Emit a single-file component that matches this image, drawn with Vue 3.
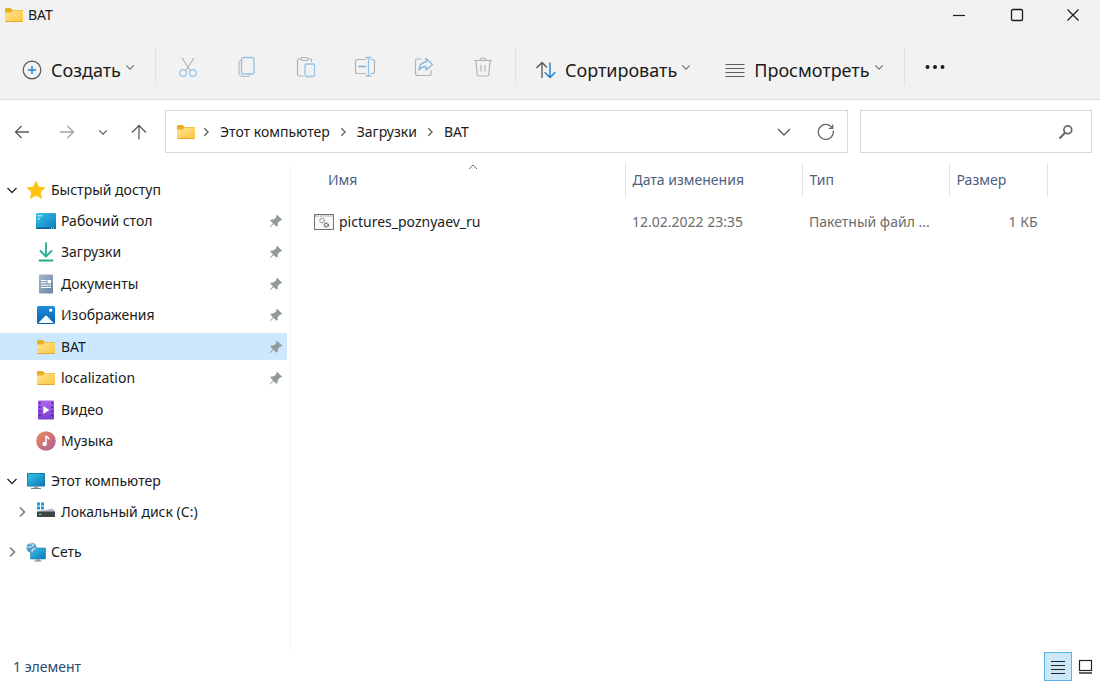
<script setup>
import { ref } from 'vue'

const search = ref('')
const view = ref('details')

const tools = [
  { id: 'cut', label: 'Вырезать' },
  { id: 'copy', label: 'Копировать' },
  { id: 'paste', label: 'Вставить' },
  { id: 'rename', label: 'Переименовать' },
  { id: 'share', label: 'Поделиться' },
  { id: 'delete', label: 'Удалить' },
]

const quick = [
  { icon: 'desktop', name: 'Рабочий стол', pinned: true },
  { icon: 'downloads', name: 'Загрузки', pinned: true },
  { icon: 'documents', name: 'Документы', pinned: true },
  { icon: 'pictures', name: 'Изображения', pinned: true },
  { icon: 'folder', name: 'BAT', pinned: true, current: true },
  { icon: 'folder', name: 'localization', pinned: true },
  { icon: 'video', name: 'Видео' },
  { icon: 'music', name: 'Музыка' },
]

const crumbs = ['Этот компьютер', 'Загрузки', 'BAT']

const files = [
  { name: 'pictures_poznyaev_ru', date: '12.02.2022 23:35', type: 'Пакетный файл ...', size: '1 КБ' },
]
</script>

<template>
  <div class="window">
    <svg class="defs" width="0" height="0" aria-hidden="true">
      <defs>
        <linearGradient id="gFolder" x1="0" y1="0" x2="1" y2="1">
          <stop offset="0" stop-color="#ffe394" /><stop offset="1" stop-color="#fbc73f" />
        </linearGradient>
        <linearGradient id="gBlue" x1="0" y1="0" x2="1" y2="1">
          <stop offset="0" stop-color="#34c6e6" /><stop offset="1" stop-color="#0f78bd" />
        </linearGradient>
        <linearGradient id="gDoc" x1="0" y1="0" x2="1" y2="1">
          <stop offset="0" stop-color="#a3b5ca" /><stop offset="1" stop-color="#6d86a5" />
        </linearGradient>
        <linearGradient id="gPic" x1="0" y1="0" x2="0" y2="1">
          <stop offset="0" stop-color="#1d8fdc" /><stop offset="1" stop-color="#0b5fae" />
        </linearGradient>
        <linearGradient id="gVideo" x1="0" y1="0" x2="0" y2="1">
          <stop offset="0" stop-color="#a866ea" /><stop offset="1" stop-color="#7b3fd0" />
        </linearGradient>
        <linearGradient id="gMusic" x1="0" y1="0" x2="1" y2="1">
          <stop offset="0" stop-color="#ee8a55" /><stop offset="1" stop-color="#b05a9c" />
        </linearGradient>
        <symbol id="folder" viewBox="0 0 20 20">
          <path d="M1 4.2Q1 3 2.200 3H6.500L8.600 5H18Q19 5 19 6V8H1Z" fill="#e9ae22" />
          <path d="M1 7.500H6.800L8.600 5.500H18Q19 5.500 19 6.500V15.800Q19 17 17.800 17H2.200Q1 17 1 15.800Z" fill="url(#gFolder)" />
          <path d="M1 15.600Q1 17 2.200 17H17.800Q19 17 19 15.600V16H1Z" fill="#e3a32c" />
        </symbol>
        <symbol id="desktop" viewBox="0 0 20 20">
          <rect y="2" width="20" height="16" rx="1.300" fill="url(#gBlue)" />
          <path d="M0 16.500H20V17Q20 18 19 18H1Q0 18 0 17Z" fill="#0b5f96" />
          <path d="M2 4h1.500v1.500H2zM2 7h1.500v1.500H2zM4.500 4H6v1.500H4.500zM15 16.600h1v1h-1zM17 16.600h1v1h-1z" fill="#d9f7ff" />
        </symbol>
        <symbol id="downloads" viewBox="0 0 20 20">
          <path d="M10 1V14M4.500 9L10 14.500L15.500 9M3.500 18.500H16.500" fill="none" stroke="#1fb08d" stroke-width="1.800" stroke-linecap="round" stroke-linejoin="round" />
        </symbol>
        <symbol id="documents" viewBox="0 0 20 20">
          <rect x="3" y="0.500" width="14" height="19" rx="1.200" fill="url(#gDoc)" />
          <path d="M5 6.500H10.500M5 8.800H10.500M5 11.200H15M5 13.500H15" stroke="#fff" stroke-width="1" />
          <rect x="11.500" y="6" width="3.500" height="3.300" fill="#fff" />
        </symbol>
        <symbol id="pictures" viewBox="0 0 20 20">
          <rect x="1" y="1" width="18" height="18" rx="1.500" fill="url(#gPic)" />
          <path d="M2.300 18L9 11Q10 10.200 11 11L17.700 18Z" fill="#f3faff" />
          <circle cx="14.700" cy="5.200" r="1.600" fill="#fff" />
        </symbol>
        <symbol id="video" viewBox="0 0 20 20">
          <rect x="2" y="0.500" width="16" height="19" rx="1" fill="url(#gVideo)" />
          <path d="M3.800 2V19M16.200 2V19" stroke="#4a1d8c" stroke-width="1.500" stroke-dasharray="1.700 2.500" />
          <path d="M7.300 6L13.500 10L7.300 14Z" fill="#fff" />
        </symbol>
        <symbol id="music" viewBox="0 0 20 20">
          <circle cx="10" cy="10" r="9.800" fill="url(#gMusic)" />
          <circle cx="8.600" cy="13" r="2.200" fill="#fff" />
          <path d="M10 13V4.800C10.600 6.300 12.800 6.100 13 8.500" fill="none" stroke="#fff" stroke-width="1.500" />
        </symbol>
        <symbol id="star" viewBox="0 0 20 20">
          <path d="M10 1.500L12.600 7.200L18.800 7.900L14.200 12.100L15.500 18.300L10 15.100L4.500 18.300L5.800 12.100L1.200 7.900L7.400 7.200Z" fill="#fdc50f" stroke="#fdc50f" stroke-width="1" stroke-linejoin="round" />
        </symbol>
        <symbol id="monitor" viewBox="0 0 20 20">
          <rect x="1" y="2" width="18" height="13.500" rx="0.700" fill="#156e9d" />
          <rect x="1.800" y="2.800" width="16.400" height="12" fill="url(#gBlue)" />
          <path d="M8 15.500H12V17.500H8Z" fill="#8ca0ab" /><path d="M5 17.500H15" stroke="#6c8492" />
        </symbol>
        <symbol id="drive" viewBox="0 0 20 20">
          <path d="M1 0.500h3v3H1zM5 0.500h3v3H5zM1 4.500h3v3H1zM5 4.500h3v3H5z" fill="#119bd8" />
          <path d="M3 9L17 6.500L19 10H1Z" fill="#b9bcbe" />
          <rect x="1" y="9.500" width="18" height="5.500" rx="0.600" fill="#414446" />
          <rect x="3" y="11.700" width="2.500" height="1.300" fill="#4ddf5f" />
        </symbol>
        <symbol id="network" viewBox="0 0 20 20">
          <rect x="4.500" y="6" width="15" height="11" rx="0.600" fill="url(#gBlue)" stroke="#177ba8" stroke-width="0.600" />
          <path d="M10.500 17H13.500V18.800H10.500Z" fill="#91a5ae" /><path d="M8.500 19H15.500" stroke="#6c8492" />
          <circle cx="5.500" cy="5.800" r="5" fill="#4e9cc4" />
          <path d="M3 2Q6 1 7.500 3Q6 5.500 4 5Q2 4.500 1.500 5.500M6 10Q6 7 9.500 6.500" fill="none" stroke="#c7e4f1" stroke-width="1.300" />
        </symbol>
        <symbol id="pin" viewBox="0 0 14 14">
          <path d="M8 0.800L13.200 5.800L12.200 6.700L11.200 6.500L8.800 9L8.700 11.800L7.600 12.700L4.600 9.900L1.200 13.200L0.700 13.300L0.800 12.700L4 9.300L1.200 6.400L2.200 5.400L5 5.300L7.400 2.900L7.100 1.700Z" fill="#929a9d" />
        </symbol>
        <symbol id="down" viewBox="0 0 12 12">
          <path d="M1.500 4L6 8.500L10.500 4" fill="none" stroke="currentColor" stroke-width="1.500" />
        </symbol>
        <symbol id="right" viewBox="0 0 12 12">
          <path d="M4 1.500L8.500 6L4 10.500" fill="none" stroke="currentColor" stroke-width="1.500" />
        </symbol>
      </defs>
    </svg>

    <header class="top">
      <div class="titlebar">
        <svg class="icon"><use href="#folder" /></svg>
        <h1>BAT</h1>
        <div class="controls">
          <button aria-label="Свернуть"><svg width="14" height="14"><path d="M1 7.500H13" stroke="#1b1b1b" stroke-width="1.200" /></svg></button>
          <button aria-label="Развернуть"><svg width="14" height="14"><rect x="1.500" y="1.500" width="11" height="11" rx="1.200" fill="none" stroke="#1b1b1b" stroke-width="1.300" /></svg></button>
          <button aria-label="Закрыть"><svg width="14" height="14"><path d="M1.500 1.500L12.500 12.500M12.500 1.500L1.500 12.500" stroke="#1b1b1b" stroke-width="1.200" /></svg></button>
        </div>
      </div>

      <div class="toolbar">
        <button class="command create">
          <svg class="icon" viewBox="0 0 20 20" fill="none">
            <circle cx="10" cy="10" r="8.800" stroke="#555" stroke-width="1.200" />
            <path d="M10 6V14M6 10H14" stroke="#1a7fd0" stroke-width="1.400" />
          </svg>
          <span>Создать</span>
          <svg class="caret"><use href="#down" /></svg>
        </button>
        <div class="tools">
          <button v-for="t in tools" :key="t.id" :aria-label="t.label" disabled>
            <svg v-if="t.id === 'cut'" width="22" height="22" fill="none">
              <path d="M5 2L13.500 15M17 2L8.500 15" stroke="#b3b5b7" stroke-width="1.200" />
              <circle cx="6" cy="17" r="3.300" stroke="#93c3e8" stroke-width="1.200" /><circle cx="16" cy="17" r="3.300" stroke="#93c3e8" stroke-width="1.200" />
            </svg>
            <svg v-else-if="t.id === 'copy'" width="22" height="22" fill="none">
              <path d="M5 4Q3 5 3 7V16Q3 20.500 7.500 20.500H12Q13.500 20.500 14 19.500" stroke="#b9bbbd" stroke-width="1.200" />
              <rect x="5.500" y="1.500" width="12.500" height="16.500" rx="2" stroke="#93c3e8" stroke-width="1.300" />
            </svg>
            <svg v-else-if="t.id === 'paste'" width="22" height="22" fill="none">
              <path d="M6.500 3H4Q2.500 3 2.500 4.500V18.500Q2.500 20 4 20H8.500M12.500 3H15Q16.500 3 16.500 4.500V6" stroke="#b0b2b4" stroke-width="1.200" />
              <rect x="6" y="1.500" width="7" height="3" rx="1.500" stroke="#b0b2b4" stroke-width="1.200" />
              <rect x="10" y="8" width="9.500" height="12.500" rx="1.500" stroke="#93c3e8" stroke-width="1.300" />
            </svg>
            <svg v-else-if="t.id === 'rename'" width="22" height="22" fill="none">
              <path d="M12 3.500H3.500Q1.500 3.500 1.500 5.500V15.500Q1.500 17.500 3.500 17.500H12M17 3.500H18.500Q20.500 3.500 20.500 5.500V15.500Q20.500 17.500 18.500 17.500H17" stroke="#b0b2b4" stroke-width="1.200" />
              <path d="M11.500 1.500H17.500M14.500 1.500V20M11.500 20H17.500" stroke="#93c3e8" stroke-width="1.300" />
              <path d="M4.500 10.500H12" stroke="#7db6e3" stroke-width="1.700" />
            </svg>
            <svg v-else-if="t.id === 'share'" width="22" height="22" fill="none">
              <path d="M8.500 3H4.500Q2.500 3 2.500 5V17.500Q2.500 19.500 4.500 19.500H16Q18 19.500 18 17.500V14.500" stroke="#b0b2b4" stroke-width="1.200" />
              <path d="M13 2.500L19.500 8.500L13 14V10.500Q9 10.500 6 14Q6.500 6.500 13 6Z" stroke="#82b9e4" stroke-width="1.300" stroke-linejoin="round" />
            </svg>
            <svg v-else width="22" height="22" fill="none" stroke="#b0b2b4" stroke-width="1.200">
              <path d="M2 4.500H20M8 4.500Q8 2 11 2T14 4.500M4 4.500L5.200 18.500Q5.400 20 7 20H15Q16.600 20 16.800 18.500L18 4.500M9 9V15.500M13 9V15.500" />
            </svg>
          </button>
        </div>
        <div class="arrange">
          <button class="command">
            <svg class="icon" viewBox="0 0 20 20" fill="none">
              <path d="M6 18V2.500M0.500 8L6 2.500L11 7.500" stroke="#555" stroke-width="1.300" />
              <path d="M14 2.500V17.500M8.700 12.200L14 17.500L19.300 12.200" stroke="#1a7fd0" stroke-width="1.400" />
            </svg>
            <span>Сортировать</span>
            <svg class="caret"><use href="#down" /></svg>
          </button>
          <button class="command">
            <svg class="icon" viewBox="0 0 20 20"><path d="M0.500 4.500H19.500M0.500 8.500H19.500M0.500 12.500H19.500M0.500 16.500H19.500" stroke="#5c5c5c" stroke-width="1.100" /></svg>
            <span>Просмотреть</span>
            <svg class="caret"><use href="#down" /></svg>
          </button>
        </div>
        <button class="more" aria-label="Дополнительно">
          <svg width="20" height="6" fill="#1b1b1b"><circle cx="2.500" cy="3" r="2" /><circle cx="10" cy="3" r="2" /><circle cx="17.500" cy="3" r="2" /></svg>
        </button>
      </div>
    </header>

    <nav class="navbar" aria-label="Навигация">
      <button aria-label="Назад"><svg width="16" height="16"><path d="M15 8H1.500M7.500 2L1.500 8L7.500 14" fill="none" stroke="#5c5c5c" stroke-width="1.300" /></svg></button>
      <button class="forward" aria-label="Вперёд"><svg width="16" height="16"><path d="M1 8H14.500M8.500 2L14.500 8L8.500 14" fill="none" stroke="#a3a3a3" stroke-width="1.300" /></svg></button>
      <button class="recent" aria-label="Последние"><svg width="10" height="10"><use href="#down" /></svg></button>
      <button aria-label="Вверх"><svg width="16" height="16"><path d="M8 15.500V1.500M1 8.500L8 1.500L15 8.500" fill="none" stroke="#5c5c5c" stroke-width="1.300" /></svg></button>
      <div class="address">
        <svg class="icon"><use href="#folder" /></svg>
        <template v-for="c in crumbs" :key="c">
          <svg class="sep"><use href="#right" /></svg>
          <a href="#">{{ c }}</a>
        </template>
        <button class="history" aria-label="Журнал"><svg width="16" height="16"><path d="M2 5L8 11L14 5" fill="none" stroke="#5c5c5c" stroke-width="1.400" /></svg></button>
        <button aria-label="Обновить"><svg width="18" height="18" fill="none" stroke="#666" stroke-width="1.300"><path d="M16.200 7.500A7.500 7.500 0 1 1 13.500 3L15.500 5M15.700 1.500V5.300H11.800" /></svg></button>
      </div>
      <label class="search">
        <input v-model="search" type="search" aria-label="Поиск" />
        <svg width="16" height="16" fill="none" stroke="#666"><circle cx="9.800" cy="5.800" r="3.900" stroke-width="1.700" /><path d="M7 8.700L1.500 14.500" stroke-width="2" /></svg>
      </label>
    </nav>

    <main class="body">
      <aside class="sidebar">
        <a class="row root" href="#"><svg class="twist"><use href="#down" /></svg><svg class="icon"><use href="#star" /></svg>Быстрый доступ</a>
        <ul class="quick">
          <li v-for="q in quick" :key="q.name">
            <a class="row child" :class="{ current: q.current }" href="#">
              <svg class="icon"><use :href="'#' + q.icon" /></svg>{{ q.name }}
              <svg v-if="q.pinned" class="pin"><use href="#pin" /></svg>
            </a>
          </li>
        </ul>
        <a class="row root" href="#"><svg class="twist"><use href="#down" /></svg><svg class="icon"><use href="#monitor" /></svg>Этот компьютер</a>
        <a class="row disk" href="#"><svg class="twist closed"><use href="#right" /></svg><svg class="icon"><use href="#drive" /></svg>Локальный диск (C:)</a>
        <a class="row root" href="#"><svg class="twist closed"><use href="#right" /></svg><svg class="icon"><use href="#network" /></svg>Сеть</a>
      </aside>

      <section class="content">
        <table>
          <thead>
            <tr>
              <th class="name">Имя<svg class="sorted" width="10" height="6"><path d="M1 5L5 1L9 5" fill="none" stroke="#6a6a6a" /></svg></th>
              <th class="date">Дата изменения</th>
              <th class="type">Тип</th>
              <th class="size">Размер</th>
            </tr>
          </thead>
          <tbody>
            <tr v-for="f in files" :key="f.name">
              <td class="name">
                <a href="#">
                  <svg width="20" height="16" fill="none">
                    <rect x="0.500" y="0.500" width="19" height="15" fill="#f8f8f8" stroke="#6f7375" />
                    <path d="M1 2H19" stroke="#7d8183" stroke-dasharray="1.500 1" />
                    <circle cx="8" cy="6.500" r="2.200" stroke="#8a8f93" stroke-width="1.300" stroke-dasharray="1.200 0.500" />
                    <circle cx="12.300" cy="11" r="1.900" stroke="#4f5558" stroke-width="1.400" stroke-dasharray="1.200 0.400" />
                  </svg>
                  {{ f.name }}
                </a>
              </td>
              <td>{{ f.date }}</td>
              <td>{{ f.type }}</td>
              <td class="amount">{{ f.size }}</td>
            </tr>
          </tbody>
        </table>
      </section>
    </main>

    <footer class="status">
      <span>1 элемент</span>
      <div class="views">
        <button :class="{ on: view === 'details' }" aria-label="Таблица" @click="view = 'details'">
          <svg width="16" height="16"><path d="M1 2.500H15M1 6.500H15M1 10.500H15M1 14.500H15" stroke="#222" stroke-width="1.200" /></svg>
        </button>
        <button :class="{ on: view === 'large' }" aria-label="Крупные значки" @click="view = 'large'">
          <svg width="16" height="16" fill="none" stroke="#222"><rect x="1.500" y="1.500" width="12" height="10" stroke-width="1.200" /><path d="M1 14H14" stroke-width="1.400" /></svg>
        </button>
      </div>
    </footer>
  </div>
</template>

<style>
body {
  margin: 0;
}
</style>

<style scoped>
.window {
  display: flex;
  flex-direction: column;
  min-height: 100vh;
  background: #fff;
  color: #1b1b1b;
  font: 14px/20px "Noto Sans", "Open Sans", sans-serif;
}
.defs {
  position: absolute;
}
button {
  display: flex;
  align-items: center;
  justify-content: center;
  padding: 0;
  border: 0;
  background: none;
  color: inherit;
  font: inherit;
}
a {
  color: inherit;
  text-decoration: none;
}
svg {
  display: block;
  flex: none;
}
.icon {
  width: 20px;
  height: 20px;
}
.top {
  background: #f2f2f2;
  border-bottom: 1px solid #dcdcdc;
}
.titlebar {
  display: flex;
  align-items: center;
  gap: 4px;
  height: 30px;
  padding-left: 4px;
}
h1 {
  margin: 0;
  font-size: 14px;
  font-weight: 400;
}
.controls {
  display: flex;
  margin-left: auto;
}
.controls button {
  width: 58px;
  height: 30px;
}
.controls button:last-child {
  width: 54px;
}
.toolbar {
  display: flex;
  align-items: center;
  box-sizing: border-box;
  height: 69px;
  padding: 5px 22px 0;
}
.command {
  gap: 9px;
  height: 38px;
  padding-top: 5px;
  font-size: 18px;
  line-height: 24px;
}
.caret {
  width: 10px;
  height: 10px;
  margin-left: -5px;
  margin-bottom: 6px;
  color: #777;
}
.create {
  padding-right: 20px;
}
.tools {
  display: flex;
  gap: 37px;
  height: 38px;
  padding: 0 21px;
  border: solid #e2e2e2;
  border-width: 0 1px;
}
.arrange {
  display: flex;
  gap: 34px;
  padding: 0 20px;
  border-right: 1px solid #e2e2e2;
}
.more {
  height: 38px;
  padding-left: 20px;
}
.navbar {
  display: flex;
  align-items: center;
  padding: 10px 8px 10px 14px;
  color: #5c5c5c;
}
.navbar > button {
  width: 16px;
  height: 32px;
}
.navbar .forward {
  margin-left: 29px;
}
.navbar .recent {
  width: 10px;
  margin: 0 23px;
}
.address,
.search {
  display: flex;
  align-items: center;
  box-sizing: border-box;
  height: 43px;
  border: 1px solid #d9d9d9;
  background: #fff;
}
.address {
  flex: 1;
  margin: 0 12px 0 18px;
  padding: 0 12px 0 10px;
  color: #1b1b1b;
}
.address .icon {
  margin-right: -3px;
}
.sep {
  width: 10px;
  height: 10px;
  margin: 0 9px 0 8px;
  color: #5c5c5c;
}
.history {
  margin: 0 25px 0 auto;
}
.search {
  width: 232px;
  padding: 0 17px 0 10px;
}
.search input {
  flex: 1;
  min-width: 0;
  border: 0;
  outline: 0;
  background: none;
  font: inherit;
}
.body {
  display: flex;
  flex: 1;
}
.sidebar {
  box-sizing: border-box;
  width: 291px;
  padding-top: 13px;
  border-right: 1px solid #f5f5f5;
}
.row {
  display: flex;
  align-items: center;
  box-sizing: border-box;
  height: 27px;
  margin-right: 3px;
  white-space: nowrap;
}
.row .icon {
  margin-right: 5px;
}
.root {
  padding-left: 6px;
}
.twist {
  width: 12px;
  height: 12px;
  margin-right: 8px;
  color: #333;
}
.closed {
  color: #777;
}
.quick {
  display: grid;
  grid-auto-rows: 1fr;
  align-items: center;
  height: 252px;
  margin: 2px 0 10px;
  padding: 0;
  list-style: none;
}
.child {
  padding-left: 36px;
}
.current {
  background: #cce8ff;
}
.pin {
  width: 14px;
  height: 14px;
  margin: 0 4px 0 auto;
}
.disk {
  margin: 4px 3px 13px 0;
  padding-left: 16px;
}
.content {
  flex: 1;
}
table {
  border-collapse: collapse;
  table-layout: fixed;
  width: 757px;
}
th {
  position: relative;
  box-sizing: border-box;
  height: 34px;
  padding: 0 7px;
  border-right: 1px solid #e3e3e3;
  color: #4d6082;
  font-weight: 400;
  text-align: left;
}
th.name {
  width: 334px;
  padding-left: 37px;
}
th.date {
  width: 177px;
}
th.type {
  width: 147px;
}
.sorted {
  position: absolute;
  top: 1px;
  left: 177px;
}
td {
  height: 50px;
  padding: 0 7px;
  color: #6d6d6d;
  white-space: nowrap;
}
td.name {
  padding-left: 23px;
  color: #1b1b1b;
}
td a {
  display: flex;
  align-items: center;
  gap: 5px;
}
.amount {
  padding-right: 10px;
  text-align: right;
}
.status {
  display: flex;
  align-items: center;
  justify-content: space-between;
  padding-left: 13px;
  color: #2b4a6c;
}
.views {
  display: flex;
}
.views button {
  box-sizing: border-box;
  width: 28px;
  height: 29px;
  border: 1px solid transparent;
}
.views .on {
  border-color: #5bb4e5;
  background: #cce8f8;
}
</style>
